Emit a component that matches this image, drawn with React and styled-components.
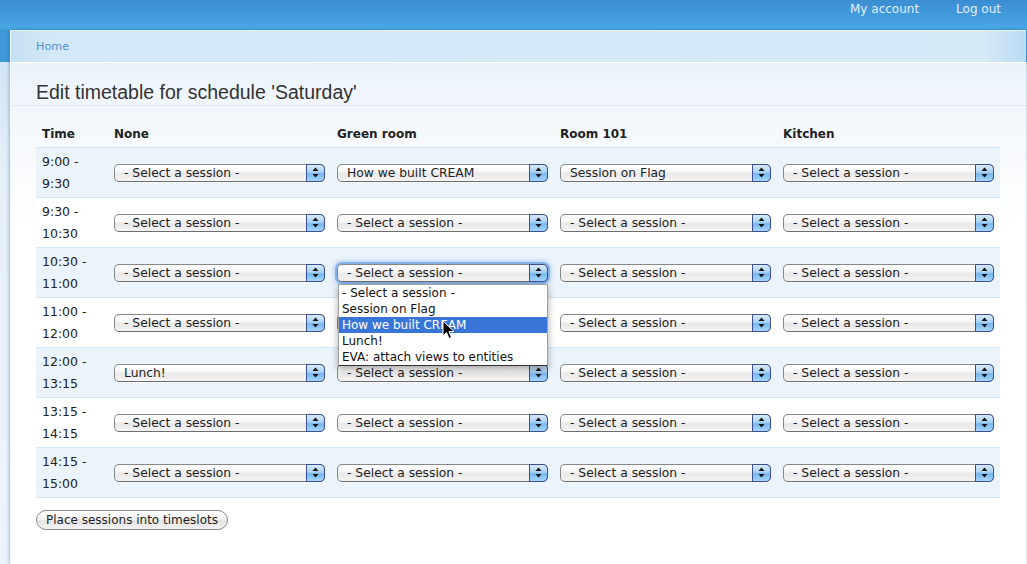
import React from 'react';
import styled, { createGlobalStyle } from 'styled-components';

const GlobalStyle = createGlobalStyle`
    html, body {
        margin: 0;
        padding: 0;
    }
    body {
        font-family: "DejaVu Sans", Verdana, sans-serif;
        background: linear-gradient(to bottom, #3a8dd1 0px, #49a7e4 28px, #3f98d8 30px, #3f98d8 62px, #d2e5f4 62px, #e6f0f9 180px, #edf4fb 564px);
        min-height: 564px;
    }
`;

const Page = styled.div`
    width: 1027px;
    min-height: 564px;
`;

const TopBar = styled.header`
    height: 30px;
    display: flex;
    justify-content: flex-end;
    align-items: flex-start;
    gap: 37px;
    padding: 1px 26px 0 0;
    box-sizing: border-box;
`;

const TopLink = styled.a`
    font-size: 12px;
    line-height: 16px;
    color: #e2eef9;
    text-decoration: none;
`;

const Panel = styled.div`
    margin: 0 1px 0 10px;
    min-height: 534px;
    background: linear-gradient(to bottom, #eaf2fa 32px, #f4f8fc 90px, #ffffff 200px);
    box-shadow: -1px 0 3px rgba(20, 80, 150, 0.35);
    border-top: 1px solid #e9f4fc;
    border-left: 1px solid #f3f8fd;
    box-sizing: border-box;
`;

const Breadcrumb = styled.nav`
    height: 31px;
    display: flex;
    align-items: center;
    padding-left: 25px;
    background:
        linear-gradient(to right, #c3def3 0px, #d4e9f7 40px, #d5e9f7 975px, #b9dbf4 1015px);
    border-bottom: 1px solid #ffffff;
`;

const Crumb = styled.a`
    font-size: 11.2px;
    color: #4f92d6;
    text-decoration: none;
`;

const Title = styled.h1`
    margin: 0;
    padding: 17px 25px 1px;
    font-family: "Liberation Sans", Arial, sans-serif;
    font-weight: normal;
    font-size: 19.5px;
    line-height: 24px;
    color: #333333;
    border-bottom: 1px solid #dfe8f1;
`;

const Content = styled.div`
    padding: 12px 25px 0;
`;

const Grid = styled.div`
    display: grid;
    grid-template-columns: 72px repeat(4, 223px);
    width: 964px;
`;

const HeadCell = styled.div`
    height: 30px;
    box-sizing: border-box;
    display: flex;
    align-items: center;
    padding: 3px 0 0 6px;
    font-size: 12px;
    font-weight: bold;
    color: #222222;
    border-bottom: 1px solid #cfe3f4;
`;

const Cell = styled.div`
    height: 49px;
    display: flex;
    align-items: center;
    padding: 0 6px;
    background: ${p => (p.$shaded ? '#ebf3fb' : '#ffffff')};
    border-bottom: 1px solid #d3e6f6;
    position: relative;
    ${p => p.$raised && 'z-index: 5;'}
`;

const TimeText = styled.div`
    font-size: 12.5px;
    line-height: 22px;
    color: #222222;
`;

const SelectBox = styled.div`
    position: relative;
    width: 100%;
    height: 18px;
    box-sizing: border-box;
    display: flex;
    align-items: stretch;
    border: 1px solid #878787;
    border-bottom-color: #6e6e6e;
    border-radius: 5px;
    background: linear-gradient(to bottom, #ffffff 0%, #f7f7f7 40%, #e8e8e8 55%, #f4f4f4 100%);
    box-shadow: ${p => (p.$focus
        ? '0 0 0 2px rgba(110, 165, 230, 0.75), 0 0 4px 3px rgba(110, 165, 230, 0.45)'
        : '0 1px 0 rgba(255,255,255,0.6)')};
`;

const SelectLabel = styled.span`
    flex: 1;
    padding-left: 9px;
    font-size: 12.3px;
    line-height: 16px;
    color: #1e1e1e;
    white-space: nowrap;
    overflow: hidden;
`;

const Stepper = styled.span`
    width: 17px;
    margin: -1px -1px -1px 0;
    border: 1px solid #3c4f95;
    border-radius: 0 5px 5px 0;
    background: linear-gradient(to bottom, #d8ebfa 0%, #a9d2f5 45%, #77b7ef 55%, #a6d6fb 100%);
    display: flex;
    align-items: center;
    justify-content: center;
`;

const Dropdown = styled.ul`
    position: absolute;
    top: 19px;
    left: 0;
    width: 210px;
    margin: 0;
    padding: 0;
    list-style: none;
    background: #ffffff;
    border: 1px solid #a0a0a0;
    border-bottom-color: #333333;
    box-shadow: 0 3px 7px rgba(0, 0, 0, 0.35);
    box-sizing: border-box;
    z-index: 10;
`;

const Option = styled.li`
    height: 16px;
    line-height: 16px;
    padding-left: 3px;
    font-size: 12px;
    color: ${p => (p.$active ? '#ffffff' : '#111111')};
    background: ${p => (p.$active ? '#3875d7' : 'transparent')};
    white-space: nowrap;
`;

const Pointer = styled.svg`
    position: absolute;
    left: 103px;
    top: 35px;
`;

const SubmitButton = styled.button`
    margin-top: 12px;
    height: 20px;
    padding: 0 9px;
    font-family: "DejaVu Sans", Verdana, sans-serif;
    font-size: 12px;
    color: #1e1e1e;
    border: 1px solid #8a8a8a;
    border-radius: 10px;
    background: linear-gradient(to bottom, #ffffff 0%, #f4f4f4 45%, #e4e4e4 55%, #f2f2f2 100%);
    box-shadow: 0 1px 0 rgba(255,255,255,0.8);
`;

const PLACEHOLDER = '- Select a session -';
const OPTIONS = [PLACEHOLDER, 'Session on Flag', 'How we built CREAM', 'Lunch!', 'EVA: attach views to entities'];

const rooms = ['None', 'Green room', 'Room 101', 'Kitchen'];

const slots = [
    { from: '9:00 -', to: '9:30', picks: [null, 'How we built CREAM', 'Session on Flag', null] },
    { from: '9:30 -', to: '10:30', picks: [null, null, null, null] },
    { from: '10:30 -', to: '11:00', picks: [null, null, null, null], open: 1 },
    { from: '11:00 -', to: '12:00', picks: [null, null, null, null] },
    { from: '12:00 -', to: '13:15', picks: ['Lunch!', null, null, null] },
    { from: '13:15 -', to: '14:15', picks: [null, null, null, null] },
    { from: '14:15 -', to: '15:00', picks: [null, null, null, null] },
];

function Arrows() {
    return (
        <svg width="7" height="11" viewBox="0 0 7 11">
            <path d="M3.5 0.5 L6.5 4 L0.5 4 Z" fill="#111" />
            <path d="M3.5 10.5 L6.5 7 L0.5 7 Z" fill="#111" />
        </svg>
    );
}

function Select({ value, open }) {
    return (
        <SelectBox $focus={open}>
            <SelectLabel>{value || PLACEHOLDER}</SelectLabel>
            <Stepper><Arrows /></Stepper>
            {open && (
                <Dropdown>
                    {OPTIONS.map(o => (
                        <Option key={o} $active={o === 'How we built CREAM'}>{o}</Option>
                    ))}
                    <Pointer width="13" height="20" viewBox="0 0 13 20">
                        <path d="M1 1 L1 16 L4.5 12.5 L7 18.5 L9.5 17.5 L7 11.5 L12 11.5 Z"
                            fill="#000" stroke="#fff" strokeWidth="1" strokeLinejoin="round" />
                    </Pointer>
                </Dropdown>
            )}
        </SelectBox>
    );
}

export default function App() {
    return (
        <Page>
            <GlobalStyle />
            <TopBar>
                <TopLink href="#">My account</TopLink>
                <TopLink href="#">Log out</TopLink>
            </TopBar>
            <Panel>
                <Breadcrumb>
                    <Crumb href="#">Home</Crumb>
                </Breadcrumb>
                <Title>Edit timetable for schedule 'Saturday'</Title>
                <Content>
                    <Grid>
                        <HeadCell>Time</HeadCell>
                        {rooms.map(r => <HeadCell key={r}>{r}</HeadCell>)}
                        {slots.map((s, i) => (
                            <React.Fragment key={s.from}>
                                <Cell $shaded={i % 2 === 0}>
                                    <TimeText>{s.from}<br />{s.to}</TimeText>
                                </Cell>
                                {s.picks.map((p, j) => (
                                    <Cell key={j} $shaded={i % 2 === 0} $raised={s.open === j}>
                                        <Select value={p} open={s.open === j} />
                                    </Cell>
                                ))}
                            </React.Fragment>
                        ))}
                    </Grid>
                    <SubmitButton>Place sessions into timeslots</SubmitButton>
                </Content>
            </Panel>
        </Page>
    );
}
